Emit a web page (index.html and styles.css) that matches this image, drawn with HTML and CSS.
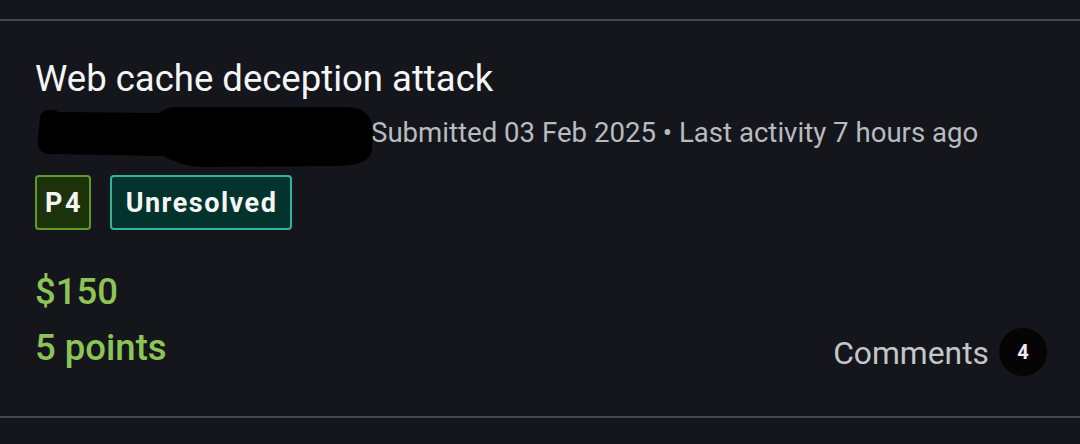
FILE: index.html
```html
<!DOCTYPE html>
<html lang="en">
<head>
<meta charset="utf-8">
<title>Report</title>
<link rel="stylesheet" href="styles.css">
</head>
<body>
<article class="card">
  <h1 class="title">Web cache deception attack</h1>
  <div class="meta">
    <svg class="redact" width="340" height="66" viewBox="0 0 340 66" aria-hidden="true">
      <path d="M5 16 C5 8 15 6 24 10 L125 11 C130 6 136 5 146 5 L310 5 C330 5 338 15 338 30 L337 48 C336 58 325 63 305 64 L170 65 C150 65 140 60 128 54 L15 52 C4 52 2 44 3 35 Z" fill="#000"/>
    </svg>
    <span class="meta-text">Submitted 03 Feb 2025 • Last activity 7 hours ago</span>
  </div>
  <div class="tags">
    <span class="tag tag-priority">P4</span>
    <span class="tag tag-state">Unresolved</span>
  </div>
  <div class="footer">
    <div class="reward">
      <div class="amount">$150</div>
      <div class="points">5 points</div>
    </div>
    <div class="comments">
      <span class="comments-label">Comments</span>
      <span class="comments-count">4</span>
    </div>
  </div>
</article>
</body>
</html>
```
FILE: styles.css
```css
html, body {
  margin: 0;
  padding: 0;
  background: #14161b;
}
body {
  font-family: Roboto, "Liberation Sans", sans-serif;
  color: #f2f3f5;
  height: 444px;
  overflow: hidden;
}
.card {
  margin-top: 19px;
  border-top: 2px solid #45474b;
  border-bottom: 2px solid #45474b;
  padding: 37px 33px 40px 35px;
}
.title {
  margin: 0;
  font-size: 36.5px;
  font-weight: 400;
  line-height: 42px;
  color: #f4f5f7;
}
.meta {
  display: flex;
  align-items: flex-start;
  margin-top: 2px;
}
.redact {
  display: block;
  flex: none;
  position: relative;
  z-index: 1;
  margin-right: -4px;
}
.meta-text {
  margin-top: 14px;
  font-size: 27.6px;
  line-height: 33px;
  color: #b8bbc0;
  white-space: nowrap;
}
.tags {
  display: flex;
  gap: 19px;
  margin-top: 7px;
}
.tag {
  box-sizing: border-box;
  height: 55px;
  display: flex;
  align-items: center;
  justify-content: center;
  border: 2px solid;
  border-radius: 4px;
  font-size: 27px;
  font-weight: 700;
  color: #f4f6f4;
}
.tag-priority {
  width: 56px;
  letter-spacing: 2.5px;
  padding-left: 2px;
  background: #1c320b;
  border-color: #5f9a2c;
}
.tag-state {
  width: 182px;
  letter-spacing: 1.5px;
  padding-left: 1px;
  background: #04332e;
  border-color: #2fb59c;
}
.footer {
  display: flex;
  justify-content: space-between;
  align-items: flex-end;
  margin-top: 34px;
}
.reward {
  color: #8cc556;
  font-size: 36.5px;
  font-weight: 500;
  line-height: 56px;
}
.comments {
  display: flex;
  align-items: flex-end;
  gap: 10px;
}
.comments-label {
  font-size: 31.8px;
  line-height: 46px;
  color: #c3c6ca;
}
.comments-count {
  width: 48px;
  height: 48px;
  border-radius: 50%;
  background: #050505;
  display: flex;
  align-items: center;
  justify-content: center;
  font-size: 20px;
  font-weight: 700;
  color: #ececec;
}
```
